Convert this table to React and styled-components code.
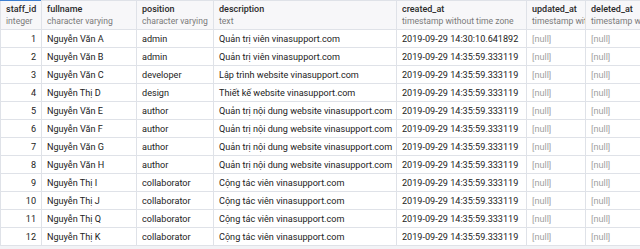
import React from "react";
import styled, { createGlobalStyle } from "styled-components";

const Global = createGlobalStyle`
  html, body { margin: 0; padding: 0; background: #f2f3f6; }
  body { font-family: Roboto, "Noto Sans", "Liberation Sans", sans-serif; }
`;

const Frame = styled.div`
  width: 640px;
  height: 249px;
  overflow: hidden;
  background: #f2f3f6;
`;

const Table = styled.table`
  border-collapse: collapse;
  table-layout: fixed;
  width: 700px;
  font-size: 9.1px;
  color: #222;
`;

const HeadCell = styled.th`
  box-sizing: border-box;
  height: 29px;
  padding: 0 5px;
  text-align: left;
  vertical-align: top;
  background: #f7f7f9;
  border: 1px solid #dfe2e8;
  border-top: 1px solid ${(p) => (p.$active ? "#3d7fd1" : "#dfe2e8")};
  overflow: hidden;
  white-space: nowrap;
  line-height: 12px;
`;

const ColName = styled.div`
  margin-top: 2px;
  color: #2a2a2a;
  font-size: 9px;
  font-weight: 500;
`;

const ColType = styled.div`
  color: #7a7a7a;
  font-size: 8.6px;
  font-weight: 400;
`;

const Cell = styled.td`
  box-sizing: border-box;
  height: 18px;
  padding: 1px 5px 0;
  border: 1px solid #dfe2e8;
  background: #fff;
  white-space: nowrap;
  overflow: hidden;
  line-height: 15px;
  text-align: ${(p) => (p.$num ? "right" : "left")};
  color: ${(p) => (p.$null ? "#a0a0a0" : "#222")};
`;

const cols = [
  { name: "staff_id", type: "integer", w: 41 },
  { name: "fullname", type: "character varying", w: 95 },
  { name: "position", type: "character varying", w: 77 },
  { name: "description", type: "text", w: 183 },
  { name: "created_at", type: "timestamp without time zone", w: 130 },
  { name: "updated_at", type: "timestamp without time zone", w: 59 },
  { name: "deleted_at", type: "timestamp without time zone", w: 115 },
];

const T = "2019-09-29 14:35:59.333119";
const rows = [
  [1, "Nguyễn Văn A", "admin", "Quản trị viên vinasupport.com", "2019-09-29 14:30:10.641892"],
  [2, "Nguyễn Văn B", "admin", "Quản trị viên vinasupport.com", T],
  [3, "Nguyễn Văn C", "developer", "Lập trình website vinasupport.com", T],
  [4, "Nguyễn Thị D", "design", "Thiết kế website vinasupport.com", T],
  [5, "Nguyễn Văn E", "author", "Quản trị nội dung website vinasupport.com", T],
  [6, "Nguyễn Văn F", "author", "Quản trị nội dung website vinasupport.com", T],
  [7, "Nguyễn Văn G", "author", "Quản trị nội dung website vinasupport.com", T],
  [8, "Nguyễn Văn H", "author", "Quản trị nội dung website vinasupport.com", T],
  [9, "Nguyễn Thị I", "collaborator", "Cộng tác viên vinasupport.com", T],
  [10, "Nguyễn Thị J", "collaborator", "Cộng tác viên vinasupport.com", T],
  [11, "Nguyễn Thị Q", "collaborator", "Cộng tác viên vinasupport.com", T],
  [12, "Nguyễn Thị K", "collaborator", "Cộng tác viên vinasupport.com", T],
];

export default function App() {
  return (
    <Frame>
      <Global />
      <Table>
        <colgroup>
          {cols.map((c) => (
            <col key={c.name} style={{ width: c.w }} />
          ))}
        </colgroup>
        <thead>
          <tr>
            {cols.map((c, i) => (
              <HeadCell key={c.name} $active={i === 0}>
                <ColName>{c.name}</ColName>
                <ColType>{c.type}</ColType>
              </HeadCell>
            ))}
          </tr>
        </thead>
        <tbody>
          {rows.map((r) => (
            <tr key={r[0]}>
              <Cell $num>{r[0]}</Cell>
              <Cell>{r[1]}</Cell>
              <Cell>{r[2]}</Cell>
              <Cell>{r[3]}</Cell>
              <Cell>{r[4]}</Cell>
              <Cell $null>[null]</Cell>
              <Cell $null>[null]</Cell>
            </tr>
          ))}
        </tbody>
      </Table>
    </Frame>
  );
}
